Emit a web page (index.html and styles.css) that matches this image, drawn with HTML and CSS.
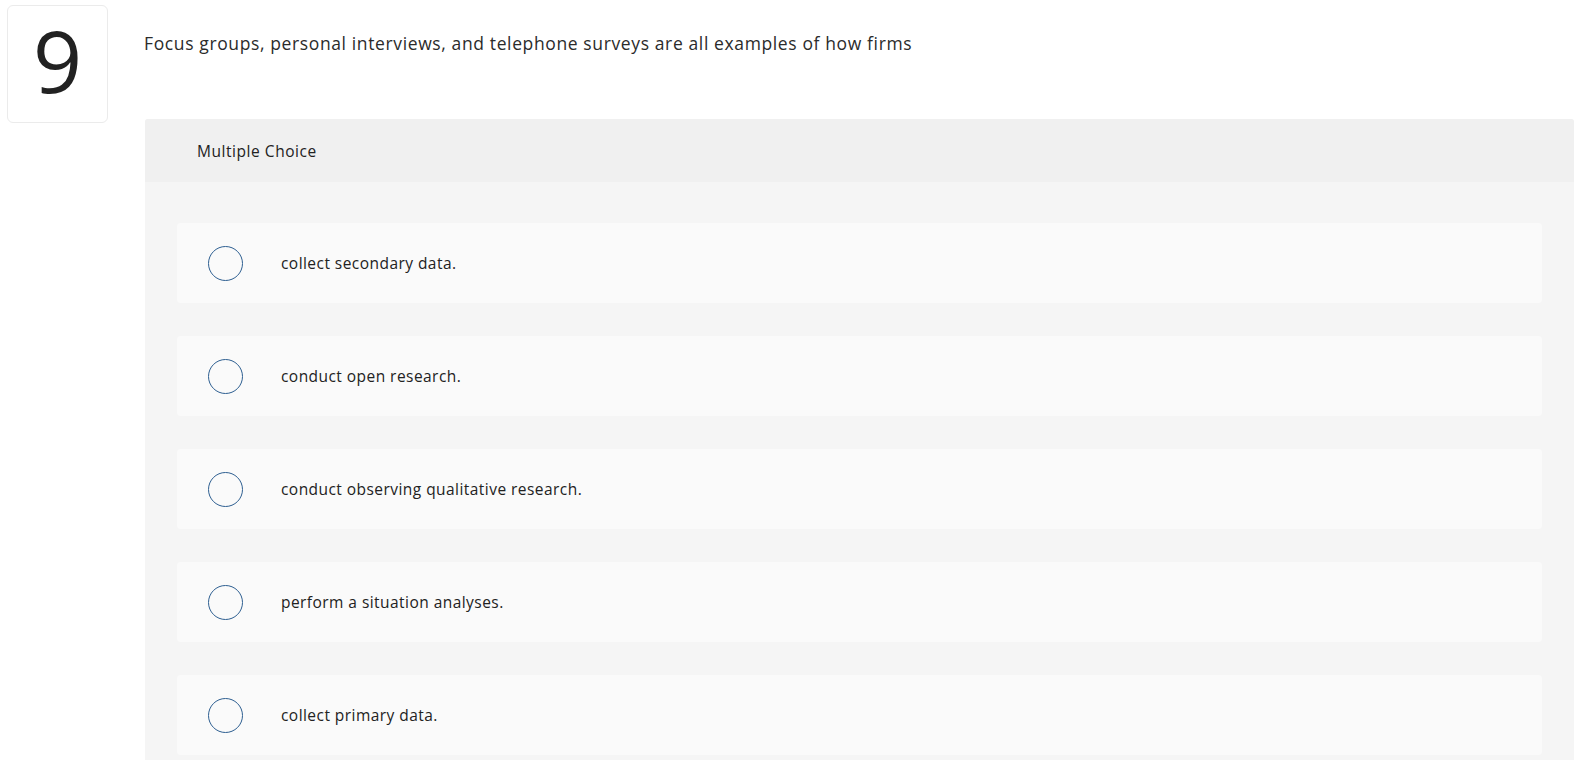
FILE: index.html
```html
<!DOCTYPE html>
<html>
<head>
<meta charset="utf-8">
<link rel="stylesheet" href="styles.css">
</head>
<body>
<div class="page">
  <div class="num">9</div>
  <div class="main">
    <p class="question">Focus groups, personal interviews, and telephone surveys are all examples of how firms</p>
    <div class="panel">
      <div class="panel-head">Multiple Choice</div>
      <div class="panel-body">
        <div class="option"><span class="radio"></span><span class="label">collect secondary data.</span></div>
        <div class="option"><span class="radio"></span><span class="label">conduct open research.</span></div>
        <div class="option"><span class="radio"></span><span class="label">conduct observing qualitative research.</span></div>
        <div class="option"><span class="radio"></span><span class="label">perform a situation analyses.</span></div>
        <div class="option"><span class="radio"></span><span class="label">collect primary data.</span></div>
      </div>
    </div>
  </div>
</div>
</body>
</html>
```
FILE: styles.css
```css
html, body {
  margin: 0;
  padding: 0;
  background: #fff;
  overflow: hidden;
}
body {
  font-family: "Open Sans", "Liberation Sans", sans-serif;
  color: #222;
  font-variant-ligatures: none;
}
.page {
  display: flex;
  align-items: flex-start;
  padding: 5px 8px 0 7px;
}
.num {
  flex: none;
  width: 99px;
  height: 108px;
  border: 1px solid #ebebeb;
  border-radius: 6px;
  display: flex;
  align-items: center;
  justify-content: center;
  font-size: 86px;
  line-height: 1;
  color: #222;
  padding-bottom: 8px;
  box-sizing: content-box;
}
.main {
  flex: 1;
  margin-left: 35px;
}
.question {
  margin: 0;
  padding: 26px 0 0 1px;
  height: 88px;
  font-size: 17.5px;
  letter-spacing: 0.62px;
  line-height: 24px;
  color: #2b2b2b;
}
.panel {
  margin-left: 2px;
  border-radius: 3px 3px 0 0;
  overflow: hidden;
  background: #f5f5f5;
}
.panel-head {
  height: 63px;
  background: #f0f0f0;
  display: flex;
  align-items: center;
  padding-left: 52px;
  font-size: 15.5px;
  letter-spacing: 0.55px;
  color: #222;
}
.panel-body {
  display: flex;
  flex-direction: column;
  gap: 33px;
  padding: 41px 32px 40px 32px;
}
.option {
  flex: none;
  height: 80px;
  background: #fafafa;
  border-radius: 4px;
  display: flex;
  align-items: center;
  padding-left: 31px;
}
.radio {
  flex: none;
  width: 33px;
  height: 33px;
  border: 1.5px solid #2e5f91;
  border-radius: 50%;
  background: #fafafa;
}
.label {
  margin-left: 38px;
  font-size: 15.5px;
  letter-spacing: 0.45px;
  color: #222;
}
```
